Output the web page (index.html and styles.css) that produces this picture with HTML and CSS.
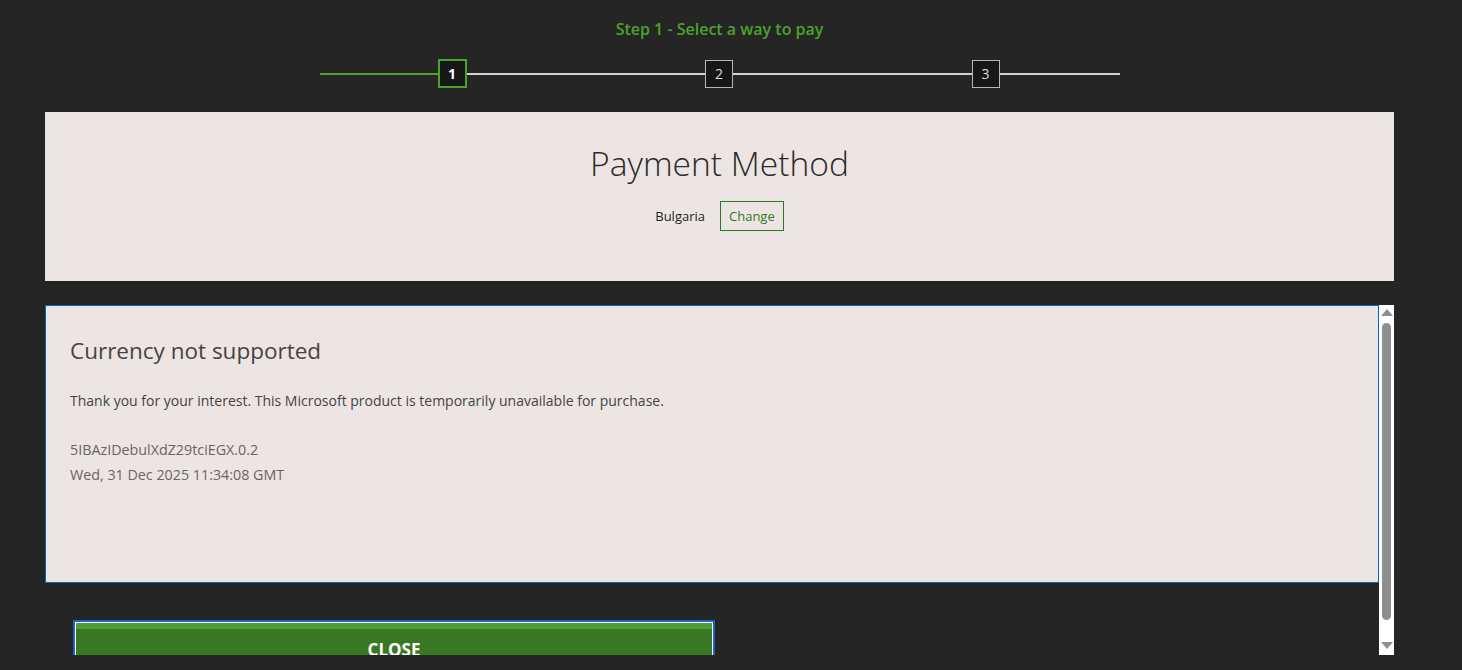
FILE: index.html
```html
<!DOCTYPE html>
<html lang="en">
<head>
  <meta charset="UTF-8">
  <title>Select a way to pay</title>
  <link rel="stylesheet" href="styles.css">
</head>
<body>

  <div class="page">
    <h2 class="step-title">Step 1 - Select a way to pay</h2>

    <div class="stepper">
      <div class="line done first"></div>
      <div class="step current">1</div>
      <div class="line"></div>
      <div class="step">2</div>
      <div class="line"></div>
      <div class="step">3</div>
      <div class="line last"></div>
    </div>

    <div class="method-panel">
      <h1>Payment Method</h1>
      <div class="country-row">
        <span class="country">Bulgaria</span>
        <button class="change-btn">Change</button>
      </div>
    </div>

    <div class="scroll-area">
      <div class="scroll-content">
        <div class="message-box">
          <h3>Currency not supported</h3>
          <p class="message">Thank you for your interest. This Microsoft product is temporarily unavailable for purchase.</p>
          <p class="trace">5IBAzIDebulXdZ29tciEGX.0.2<br>Wed, 31 Dec 2025 11:34:08 GMT</p>
        </div>
        <div class="close-wrap">
          <button class="close-btn">CLOSE</button>
        </div>
      </div>
      <div class="scrollbar">
        <div class="arrow up"></div>
        <div class="thumb"></div>
        <div class="arrow down"></div>
      </div>
    </div>
  </div>

</body>
</html>
```

FILE: styles.css
```css
body {
  margin: 0;
  background-color: #252525;
  font-family: "Open Sans", "Noto Sans", sans-serif;
  color: #333;
}

.page {
  width: 1349px;
  margin-left: 45px;
  padding-top: 17px;
}

.step-title {
  margin: 0;
  text-align: center;
  color: #4ca22c;
  font-size: 16px;
  font-weight: 600;
  line-height: 24px;
}

/* stepper */
.stepper {
  display: flex;
  align-items: center;
  width: 800px;
  margin: 18px auto 0;
  height: 29px;
}

.line {
  flex: 1;
  height: 2px;
  background-color: #d9d0ce;
}

.line.first {
  flex: none;
  width: 118px;
}

.line.last {
  flex: none;
  width: 120px;
}

.line.done {
  background-color: #4ca22c;
}

.step {
  width: 26px;
  height: 26px;
  border: 1px solid #bdb5b3;
  background-color: #171717;
  color: #ddd;
  font-size: 14px;
  display: flex;
  align-items: center;
  justify-content: center;
}

.step.current {
  width: 25px;
  height: 25px;
  border: 2px solid #4ca22c;
  color: #fff;
  font-weight: bold;
}

/* payment method */
.method-panel {
  margin-top: 24px;
  height: 169px;
  background-color: #ede5e3;
  text-align: center;
  box-sizing: border-box;
  padding-top: 28px;
}

.method-panel h1 {
  margin: 0;
  font-size: 33.6px;
  font-weight: 300;
  line-height: 46px;
  color: #2b2b2b;
}

.country-row {
  display: flex;
  justify-content: center;
  align-items: center;
  gap: 15px;
  margin-top: 15px;
}

.country {
  font-size: 13px;
  color: #222;
}

.change-btn {
  height: 30px;
  padding: 0 8px;
  border: 1px solid #2d7a1f;
  background: transparent;
  color: #2d7a1f;
  font-family: inherit;
  font-size: 13px;
}

/* scrolling part */
.scroll-area {
  display: flex;
  margin-top: 24px;
  height: 350px;
}

.scroll-content {
  flex: 1;
  overflow: hidden;
}

.scrollbar {
  width: 15px;
  background-color: #fff;
  display: flex;
  flex-direction: column;
  align-items: center;
}

.thumb {
  width: 9px;
  height: 297px;
  margin: 1px 0 0;
  background-color: #8f8f8f;
  border-radius: 5px;
}

.arrow {
  width: 0;
  height: 0;
  border-left: 6px solid transparent;
  border-right: 6px solid transparent;
}

.arrow.up {
  margin-top: 4px;
  border-bottom: 7px solid #8f8f8f;
  margin-bottom: 6px;
}

.arrow.down {
  margin-top: 22px;
  border-top: 7px solid #8f8f8f;
}

.message-box {
  height: 278px;
  box-sizing: border-box;
  background-color: #ede5e3;
  border: 1px solid #0067b8;
  padding: 30px 24px 0;
}

.message-box h3 {
  margin: 0;
  font-size: 22.5px;
  font-weight: normal;
  line-height: 30px;
  color: #444;
}

.message {
  margin: 25px 0 0;
  font-size: 14px;
  line-height: 20px;
  color: #444;
}

.trace {
  margin: 26px 0 0;
  font-size: 14.3px;
  line-height: 25px;
  color: #666;
}

.close-wrap {
  padding: 38px 0 30px 28px;
}

.close-btn {
  width: 638px;
  height: 44px;
  border: 1px solid #fff;
  outline: 2px solid #1f5fd0;
  background: linear-gradient(#4f9e35 0, #4f9e35 6px, #387823 6px);
  color: #fff;
  font-family: inherit;
  font-size: 17px;
  font-weight: bold;
  padding-top: 12px;
  margin-top: 1px;
  margin-left: 2px;
}
```
